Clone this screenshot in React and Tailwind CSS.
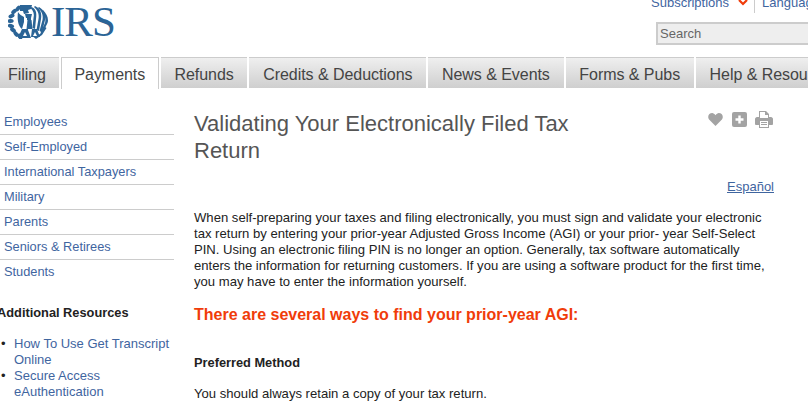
import React from "react";

const font = { fontFamily: '"Liberation Sans", Arial, sans-serif' };

const leaves = [
  [10, 4.5, 40], [6, 7.5, 50], [3.5, 12, 65], [2.5, 17, 85], [3, 22, 105], [5, 26, 125], [8, 30, 140], [12, 32.5, 155],
];
const wing = [
  "M23 3c5 1 6 6 5 12l-1 10-2.500-1 1-10c1-4 0-7-3-10z",
  "M27 2c5 2 7 7 6 13l-2 12-2.500-1 2-11c1-5-1-9-4.500-12z",
  "M31 3c5 3 7 8 6 13l-3 12-2.500-1 3-11c1-5-1-9-4.500-12z",
  "M35 6c4 4 6 9 4.500 13l-5.500 11-1.500-2 4.500-9c1-4 0-8-3-11z",
  "M38.500 24l-4.500 7-6 4-2.500-2 6.500-3 5-7z",
];

function Seal() {
  return (
    <svg width="40" height="35" viewBox="0 0 40 35" className="shrink-0">
      <g fill="#2b6496">
        {leaves.map(([x, y, r]) => (
          <ellipse key={x + "-" + y} cx={x} cy={y} rx="2" ry="3.200" transform={`rotate(${r} ${x} ${y})`} />
        ))}
        <path d="M12 1h12l-1 4-3 1 1 3-5 1-1-3h-3z" />
        <path d="M10 8c1 2 4 4 6 5v5l-2 7c-4-3-5-10-4-17z" />
        <path d="M17 10h7l-1 4h-5zM19 14h4v2h-4z" />
        <path d="M19.500 16h4l1 9h-6z" />
        {wing.map((d) => (
          <path key={d} d={d} />
        ))}
        <path d="M14 25h6v1l3 8H10zM24 25h5l3 8h-9z" />
      </g>
      <path d="M15 32l2-4 2 4zM25 32l2-4 2 4z" fill="#fff" />
    </svg>
  );
}

const tabs = ["Filing", "Payments", "Refunds", "Credits & Deductions", "News & Events", "Forms & Pubs", "Help & Resources"];
const side = ["Employees", "Self-Employed", "International Taxpayers", "Military", "Parents", "Seniors & Retirees", "Students"];

export default function App() {
  return (
    <div style={font} className="w-[808px] h-[410px] overflow-hidden bg-white text-[12px] text-[#222]">
      <header className="h-[57px] flex justify-between">
        <div className="flex items-start pl-[8px] pt-[4px]">
          <Seal />
          <span style={{ fontFamily: '"Liberation Serif", serif' }} className="mt-[-2px] ml-[3px] text-[43px] leading-[40px] text-[#2b6496] tracking-[-1px]">IRS</span>
        </div>
        <div className="w-[156px] shrink-0 flex flex-col items-start">
          <div className="flex items-center h-[14px] -mt-[1px] -ml-[1px] whitespace-nowrap text-[13px] text-[#3f659f]">
            <span className="-mt-[6px]">Subscriptions</span>
            <svg width="10" height="7" viewBox="0 0 10 7" className="ml-[9px] -mt-[7px] shrink-0"><path d="M1 1l4 4 4-4" fill="none" stroke="#f03c0a" strokeWidth="2.2" /></svg>
            <span className="w-px h-[14px] bg-[#ccc] ml-[6px] mr-[7px] shrink-0" />
            <span className="-mt-[6px]">Language</span>
          </div>
          <div className="mt-[9px] ml-[4px] w-[160px] h-[23px] bg-[#eee] border-2 border-[#ccc] border-r-0 text-[13px] leading-[19px] pl-[2px] text-[#666]">Search</div>
        </div>
      </header>

      <nav className="flex h-[32px] whitespace-nowrap tracking-[-0.05px]">
        {tabs.map((t, i) => (
          <div
            key={t}
            className={
              i === 1
                ? "h-[32px] px-[12.5px] mr-[2px] shrink-0 bg-white border-x border-t border-[#ccc] text-[16px] leading-[34px] text-[#444]"
                : "h-[31px] px-[13.75px] first:pl-[8px] first:pr-[13px] mr-[2px] shrink-0 bg-gradient-to-b from-[#efefef] to-[#cfcfcf] border-t border-[#ccc] text-[16px] leading-[33px] text-[#444]"
            }
          >
            {t}
          </div>
        ))}
      </nav>

      <div className="flex pt-[20px]">
        <aside className="w-[174px] shrink-0 pt-[1px]">
          <ul>
            {side.map((s, i) => (
              <li key={s} className={"h-[25px] leading-[23px] pl-[4px] text-[#3f659f] text-[12.8px] " + (i < 6 ? "border-b border-[#ccc]" : "")}>{s}</li>
            ))}
          </ul>
          <div className="mt-[20px] -ml-[3px] h-[16px] font-bold text-[12.8px] leading-[16px] text-[#222] whitespace-nowrap">Additional Resources</div>
          <ul className="mt-[15px] text-[13px] leading-[16px] text-[#3f659f]">
            <li className="relative pl-[14px]"><span className="absolute left-[1px] text-[#222]">•</span>How To Use Get Transcript Online</li>
            <li className="relative pl-[14px]"><span className="absolute left-[1px] text-[#222]">•</span>Secure Access eAuthentication</li>
          </ul>
        </aside>

        <main className="ml-[20px] w-[580px] shrink-0">
          <div className="flex justify-between items-start pt-[1px]">
            <h1 className="w-[400px] text-[22px] leading-[27px] text-[#555]">Validating Your Electronically Filed Tax Return</h1>
            <div className="flex items-center mr-[1px] mt-[1px]">
              <svg width="15" height="13" viewBox="0 0 14 12" fill="#a3a3a3"><path d="M7 12L1 6C-1 3 1 0 4 0c1 0 2 1 3 2 1-1 2-2 3-2 3 0 5 3 3 6z" /></svg>
              <svg width="15" height="15" viewBox="0 0 15 15" className="ml-[9px]"><rect width="15" height="15" rx="2" fill="#a3a3a3" /><path d="M7.5 3.5v8M3.5 7.5h8" stroke="#fff" strokeWidth="2.4" /></svg>
              <svg width="18" height="17" viewBox="0 0 18 17" fill="#a3a3a3" className="ml-[8px]"><path fillRule="evenodd" d="M4 0h7l3 3v3h2c1 0 2 1 2 2v5c0 1-1 1-2 1h-2v3H4v-3H2c-1 0-2 0-2-1V8c0-1 1-2 2-2h2zM5 1v6h8V4h-3V1zM5 10v6h8v-6z" /><path d="M6 11h6v1H6zM6 13h6v1H6z" /></svg>
            </div>
          </div>
          <div className="text-right mt-[15px] text-[13px] leading-[15px] text-[#3f659f] underline">Español</div>
          <p className="mt-[16px] w-[580px] text-[13.1px] leading-[16px]">
            When self-preparing your taxes and filing electronically, you must sign and validate your electronic tax return by entering your prior-year Adjusted Gross Income (AGI) or your prior- year Self-Select PIN. Using an electronic filing PIN is no longer an option. Generally, tax software automatically enters the information for returning customers. If you are using a software product for the first time, you may have to enter the information yourself.
          </p>
          <h2 className="mt-[15px] text-[16px] leading-[20px] font-bold text-[#f03c0a]">There are several ways to find your prior-year AGI:</h2>
          <div className="mt-[30px] font-bold text-[12.8px] leading-[16px]">Preferred Method</div>
          <p className="mt-[15px] text-[13.1px] leading-[16px]">You should always retain a copy of your tax return.</p>
        </main>
      </div>
    </div>
  );
}
